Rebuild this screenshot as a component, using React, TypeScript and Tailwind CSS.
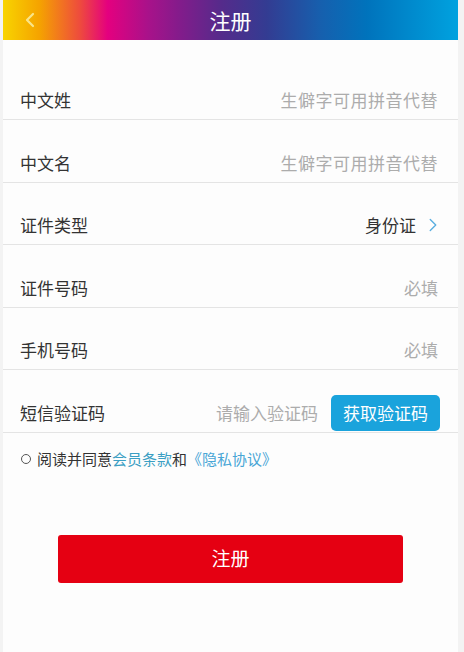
import { ChevronLeft, ChevronRight } from "lucide-react";

const font = { fontFamily: '"Noto Sans CJK SC", "Noto Sans", sans-serif' };

type Row = { label: string; hint: string };

const rows: Row[] = [
  { label: "中文姓", hint: "生僻字可用拼音代替" },
  { label: "中文名", hint: "生僻字可用拼音代替" },
];

function FieldRow({ label, tall, children }: { label: string; tall?: boolean; children: React.ReactNode }) {
  return (
    <div
      className={
        (tall ? "h-[63px] pt-[23px]" : "h-[62px] pt-[22px]") +
        " flex items-center justify-between pl-[17px] pr-[20px] border-b border-[#e4e4e4]"
      }
    >
      <span className="text-[17px] text-[#333]">{label}</span>
      {children}
    </div>
  );
}

export default function App() {
  return (
    <div className="w-[464px] h-[652px] bg-[#f3f3f3] flex" style={font}>
      <div className="ml-[3px] w-[455px] h-full bg-[#fdfdfd] flex flex-col">
        <header className="h-[40px] shrink-0 flex items-center relative bg-[linear-gradient(90deg,#f8d400_0%,#f5a300_8%,#ee4a3e_17%,#e4007f_23%,#a8128a_32%,#821c8b_39%,#552b8b_48%,#333c92_58%,#1660ae_70%,#0073bc_80%,#00a2df_100%)]">
          <ChevronLeft className="ml-[15px] text-[#f9e58a]" size={24} strokeWidth={2.2} />
          <h1 className="absolute left-0 right-0 text-center text-[21px] text-white leading-none">注册</h1>
        </header>

        <div className="h-[18px] shrink-0" />

        {rows.map((r, i) => (
          <FieldRow key={r.label} label={r.label} tall={i === 1}>
            <span className="text-[17px] tracking-[0.5px] text-[#acacac]">{r.hint}</span>
          </FieldRow>
        ))}

        <FieldRow label="证件类型">
          <div className="flex items-center">
            <span className="text-[17px] text-[#333]">身份证</span>
            <ChevronRight className="ml-[6px] -mr-[6px] text-[#5aaee0]" size={22} strokeWidth={1.5} />
          </div>
        </FieldRow>

        <FieldRow label="证件号码" tall>
          <span className="text-[17px] text-[#acacac]">必填</span>
        </FieldRow>

        <FieldRow label="手机号码">
          <span className="text-[17px] text-[#acacac]">必填</span>
        </FieldRow>

        <div className="h-[63px] pt-[23px] flex items-center pl-[17px] pr-[18px] border-b border-[#e4e4e4]">
          <span className="text-[17px] text-[#333]">短信验证码</span>
          <span className="ml-auto text-[17px] text-[#acacac]">请输入验证码</span>
          <button className="ml-[13px] w-[109px] h-[36px] rounded-[5px] bg-[#1aa3dc] text-white text-[17px]">
            获取验证码
          </button>
        </div>

        <div className="flex items-center pl-[18px] mt-[15px] text-[15px] text-[#333]">
          <span className="w-[10px] h-[10px] rounded-full border border-[#555] mr-[6px]" />
          <span>阅读并同意</span>
          <span className="text-[#3b9fc4]">会员条款</span>
          <span>和</span>
          <span className="text-[#49a6d6]">《隐私协议》</span>
        </div>

        <button className="mt-[64px] mx-auto w-[345px] h-[48px] rounded-[3px] bg-[#e50012] text-white text-[19px]">
          注册
        </button>
      </div>
    </div>
  );
}
